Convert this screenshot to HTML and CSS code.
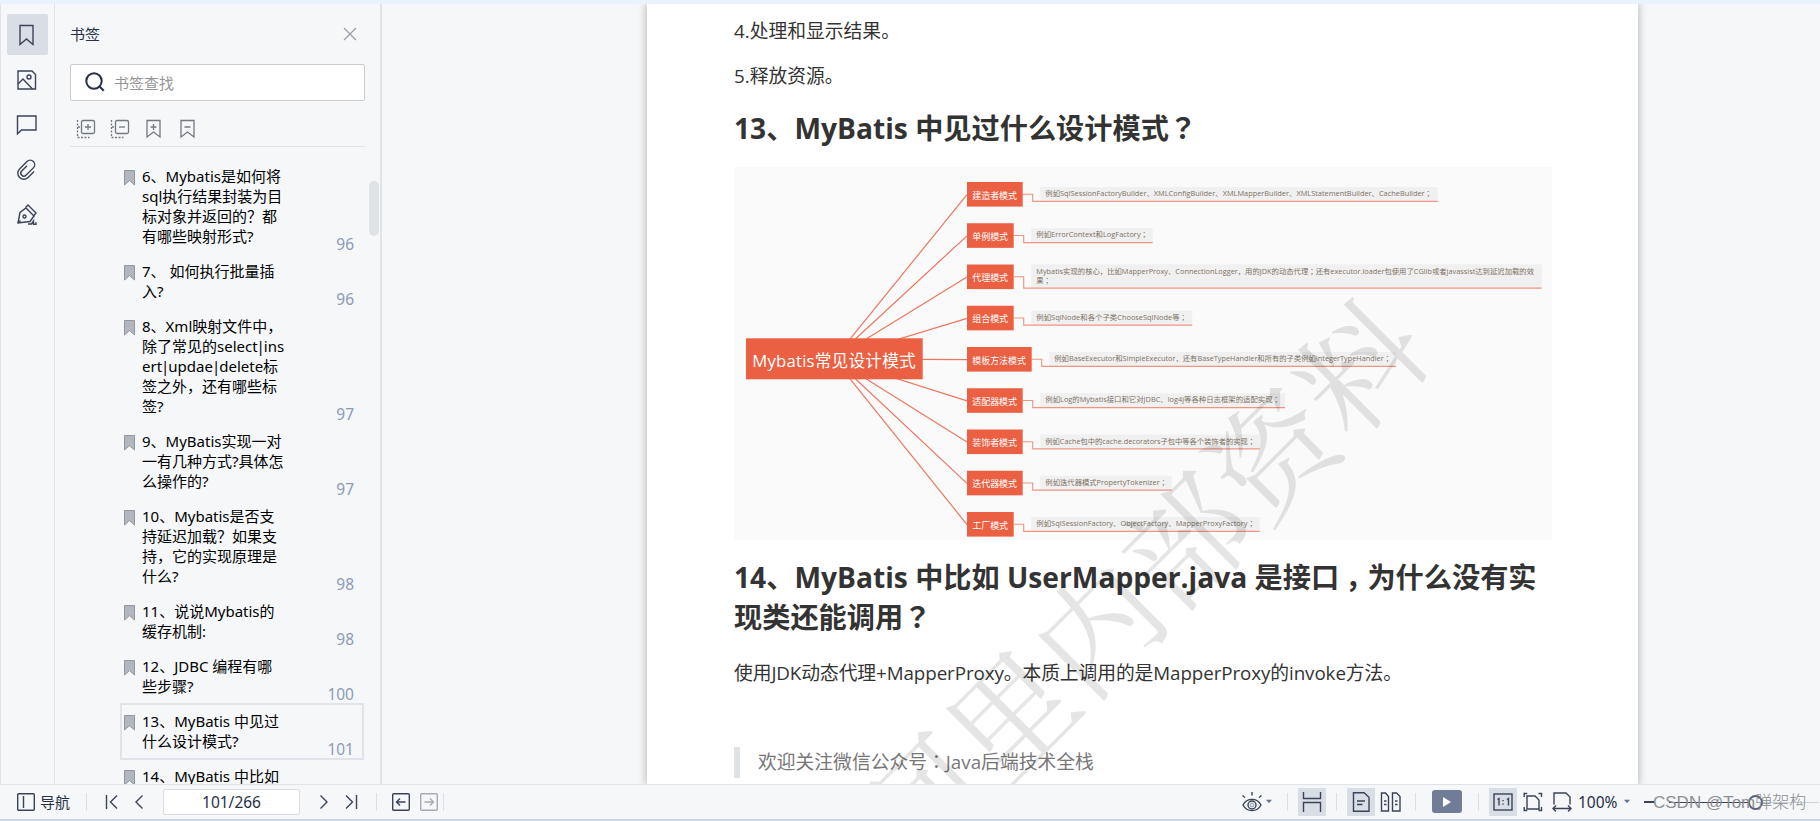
FILE: index.html
```html
<!DOCTYPE html>
<html lang="zh-CN">
<head>
<meta charset="utf-8">
<title>101/266</title>
<link rel="stylesheet" href="styles.css">
</head>
<body>
<div class="app">
  <div class="topstrip"></div>
  <div class="main">
    <nav class="rail">
      <div class="rail-btn on"><svg width="24" height="24" viewBox="0 0 24 24"><path d="M5 2.5h13v19l-6.500-5.500-6.500 5.500z"/></svg></div>
      <div class="rail-btn"><svg width="24" height="24" viewBox="0 0 24 24"><path d="M3 3h14l3.500 3.500v14.500h-17.500z"/><path d="M3 16l5-5 9.500 10"/><circle cx="14" cy="9" r="2"/></svg></div>
      <div class="rail-btn"><svg width="24" height="24" viewBox="0 0 24 24"><path d="M2.500 3h18.500v14h-14.500l-4 3.800z"/></svg></div>
      <div class="rail-btn"><svg width="24" height="24" viewBox="0 0 24 24"><path transform="rotate(45 12 12)" d="M9 9v7.500a3 3 0 0 0 6 0V6a4.500 4.500 0 0 0-9 0v10.500a6 6 0 0 0 12 0V8"/></svg></div>
      <div class="rail-btn"><svg width="24" height="24" viewBox="0 0 24 24"><path d="M3 20L5 9.500l6-4.500 8 8-4 5.500z"/><path d="M10.500 4.500L13 2l8 8-2.500 3"/><circle cx="9.500" cy="13.500" r="1.500"/><path d="M3 20l2.500-2.500M13 21h3.500l2-3v3.200h2.500v-2"/></svg></div>
    </nav>
    <aside class="panel">
      <header class="panel-head"><span>书签</span><svg width="14" height="14" viewBox="0 0 14 14"><path d="M1 1l12 12M13 1L1 13"/></svg></header>
      <div class="search"><svg width="20" height="20" viewBox="0 0 20 20"><circle cx="9" cy="9" r="7.700"/><path d="M14.500 14.500l4.300 4.300"/></svg><span>书签查找</span></div>
      <div class="tools">
        <svg width="20" height="20" viewBox="0 0 20 20"><rect x="5.500" y="1.500" width="13" height="13" rx="1.500"/><path d="M9 8h6M12 5v6"/><path class="dash" d="M1.500 1v17.500h12M2 8h3"/></svg>
        <svg width="20" height="20" viewBox="0 0 20 20"><rect x="5.500" y="1.500" width="13" height="13" rx="1.500"/><path d="M9 8h6"/><path class="dash" d="M1.500 1v17.500h12M2 8h3"/></svg>
        <svg width="20" height="20" viewBox="0 0 20 20"><path d="M3 1.500h13v16.500l-6.500-5-6.500 5zM6.500 8h6M9.500 5v6"/></svg>
        <svg width="20" height="20" viewBox="0 0 20 20"><path d="M3 1.500h13v16.500l-6.500-5-6.500 5zM6.500 8h6"/></svg>
      </div>
      <div class="list" id="list"></div>
      <div class="thumb"></div>
    </aside>
    <section class="doc">
      <article class="page">
        <p>4.处理和显示结果。</p>
        <p>5.释放资源。</p>
        <h2 class="h13">13、MyBatis 中见过什么设计模式<i lang="ja">？</i></h2>
        <svg class="map" id="map" width="818" height="373" viewBox="734 167 818 373"></svg>
        <h2 class="h14">14、MyBatis 中比如 UserMapper.java 是接口<i lang="ja" class="comma">，</i>为什么没有实<br>现类还能调用<i lang="ja">？</i></h2>
        <p class="answer">使用JDK动态代理+MapperProxy。本质上调用的是MapperProxy的invoke方法。</p>
        <blockquote>欢迎关注微信公众号<i lang="ja">：</i>Java后端技术全栈</blockquote>
        <svg class="mark" width="991" height="780" viewBox="647 4 991 780">
          <text transform="translate(1150 584) rotate(-45)" x="-376" y="41">阿里内部资料</text>
        </svg>
      </article>
    </section>
  </div>
  <footer class="bar">
    <svg class="b-nav" width="20" height="20" viewBox="0 0 20 20"><rect x="1.700" y="1.700" width="16.600" height="16.600" rx="1"/><path d="M7.500 4v12"/></svg>
    <span class="t-nav">导航</span><i class="sep s1"></i>
    <svg class="b-first" width="14" height="16" viewBox="0 0 14 16"><path d="M1.500 1v14M12 1.500L5.500 8l6.500 6.500"/></svg>
    <svg class="b-prev" width="10" height="16" viewBox="0 0 10 16"><path d="M8.500 1.500L2 8l6.500 6.500"/></svg>
    <div class="pageno">101/266</div>
    <svg class="b-next" width="10" height="16" viewBox="0 0 10 16"><path d="M1.500 1.500L8 8l-6.500 6.500"/></svg>
    <svg class="b-last" width="14" height="16" viewBox="0 0 14 16"><path d="M12.500 1v14M2 1.500L8.500 8 2 14.500"/></svg>
    <i class="sep s2"></i>
    <svg class="b-back" width="20" height="20" viewBox="0 0 20 20"><rect x="1.700" y="1.700" width="16.600" height="16.600" rx="1"/><path d="M14.500 10h-9M9 6.500L5.500 10 9 13.500"/></svg>
    <svg class="b-fwd" width="20" height="20" viewBox="0 0 20 20"><rect x="1.700" y="1.700" width="16.600" height="16.600" rx="1"/><path d="M5.500 10h9M11 6.500l3.500 3.500-3.500 3.500"/></svg>
    <i class="sep s3"></i>
    <svg class="b-eye" width="22" height="22" viewBox="0 0 22 22"><path d="M2 14c4-7.500 14-7.500 18 0-4 7.500-14 7.500-18 0z"/><circle cx="11" cy="14" r="4"/><circle cx="11" cy="14" r="1.700" opacity=".4"/><path d="M11 1v3.500M1.500 4.500l2.500 2M20.500 4.500l-2.500 2"/></svg>
    <svg class="caret c1" width="8" height="5" viewBox="0 0 8 5"><path d="M1 .8h6L4 4.200z"/></svg>
    <i class="sep s4"></i>
    <span class="tog g1"><svg width="20" height="20" viewBox="0 0 20 20"><path d="M1.500 0v6.500h17V0M1.500 20v-9.500h17V20"/></svg></span>
    <i class="sep s5"></i>
    <span class="tog g2"><svg width="20" height="20" viewBox="0 0 20 20"><path d="M2.500.8h10.500l5 4.500v14h-15.500zM6 9h8M6 12.500h5.500"/></svg></span>
    <svg class="b-two" width="22" height="20" viewBox="0 0 22 20"><path d="M1.500 1h4l3 3.500v14.500h-7zM12.500 1h4l3.500 3.500v14.500h-7.500zM4 9h2.500M4 12.500h2.500M15 9h2.500M15 12.500h2.500"/></svg>
    <i class="sep s6"></i>
    <span class="play"><svg width="8" height="10" viewBox="0 0 8 10"><path d="M0 0l8 5-8 5z"/></svg></span>
    <i class="sep s7"></i>
    <span class="tog g3"><svg width="20" height="20" viewBox="0 0 20 20"><rect x="1" y="2" width="18" height="16"/><path d="M4.500 7.500l1.500-1v7M14 7.500l1.500-1v7M10 8v1.200M10 11.500v1.200" /></svg></span>
    <svg class="b-fit" width="20" height="20" viewBox="0 0 20 20"><path d="M4 4h8l4 4v9H4zM1.200 5V1.500h3M15.500 1.500h3V5M1.200 15v3.500h3M15.500 18.500h3V15"/></svg>
    <svg class="b-wid" width="20" height="20" viewBox="0 0 20 20"><path d="M2 12.500V1h12l4 4v7.500M1 16.500h18M4 13.500l-3 3 3 3M16 13.500l3 3-3 3"/></svg>
    <span class="zoom">100%</span>
    <svg class="caret c2" width="8" height="5" viewBox="0 0 8 5"><path d="M1 .8h6L4 4.200z"/></svg>
    <div class="slider"><i class="minus"></i><i class="track"></i><i class="knob"></i><span class="csdn">CSDN @Tom弹架构</span></div>
  </footer>
</div>
<script src="app.js"></script>
</body>
</html>
```
FILE: styles.css
```css
* { box-sizing: border-box; }
body { margin: 0; overflow: hidden; font: 15px "Noto Sans", "Noto Sans CJK SC", sans-serif; color: #000; }
i { font-style: normal; }
svg { display: block; flex: none; fill: none; stroke: #3a4358; stroke-width: 1.4; }
.app { width: 1820px; height: 821px; display: flex; flex-direction: column; background: #f5f7f9; }
.topstrip { height: 4px; background: #eaf2ff; flex: none; }
.main { height: 780px; display: flex; flex: none; overflow: hidden; }

.rail { width: 55px; flex: none; border-left: 1px solid #e0e3ea; border-right: 1px solid #e0e3ea; padding: 10px 0 0 6px; display: flex; flex-direction: column; gap: 4px; }
.rail-btn { width: 41px; height: 41px; border-radius: 2px; display: flex; align-items: center; justify-content: center; padding-right: 2px; }
.rail-btn.on { background: #d9dee6; }

.panel { width: 327px; flex: none; position: relative; border-right: 2px solid #e0e3ea; padding: 0 15px; overflow: hidden; }
.panel-head { height: 60px; display: flex; align-items: center; justify-content: space-between; padding: 0 8px 1px 0; color: #273045; }
.panel-head svg { stroke: #9a9ea6; stroke-width: 1.2; }
.search { width: 295px; height: 37px; background: #fff; border: 1px solid #c9cbce; border-radius: 2px; display: flex; align-items: center; padding: 0 0 1px 14px; gap: 9px; color: #959595; }
.search svg { stroke-width: 2; stroke: #273045; }
.tools { width: 295px; height: 46px; border-bottom: 1px solid #e0e3ea; display: flex; align-items: center; padding: 12px 0 1px 6px; gap: 14px; }
.tools svg { stroke: #737881; stroke-width: 1.3; }
.tools .dash { stroke-dasharray: 2 1.5; }
.list { height: 637px; margin-top: 12px; overflow: hidden; padding-left: 51px; }
.bm { width: 242px; padding: 7px 0 8px 2px; display: flex; position: relative; }
.bm.sel { outline: 2px solid #e0e3ea; outline-offset: -1px; }
.bm svg { margin: 4px 7px 0 1px; fill: #b2b6bf; stroke: #92969f; stroke-width: 1; }
.bm span { line-height: 20px; white-space: pre; }
.bm u { text-decoration: none; letter-spacing: -1px; margin-left: -1px; }
.bm b { position: absolute; right: 9px; bottom: 0; line-height: 20px; font-weight: 400; font-size: 15.500px; color: #8d9ab8; }
.thumb { position: absolute; left: 314px; top: 177px; width: 10px; height: 55px; border-radius: 5px; background: #dfe3e6; }

.doc { flex: 1; padding-left: 265px; }
.page { position: relative; width: 991px; height: 780px; background: #fff; padding: 12px 87px 0; box-shadow: 0 0 8px 1px rgba(0,0,0,.25); overflow: visible; font-family: "Open Sans", "Noto Sans CJK SC", sans-serif; color: #333; }
.page i { font-family: "Noto Sans CJK JP", sans-serif; line-height: 0; }
.page .comma { padding-left: 6px; margin-right: -6px; }
.page p { margin: 0 0 15px; font-size: 18.800px; line-height: 30px; white-space: nowrap; }
.page h2 { margin: 0; font-size: 28.200px; line-height: 40px; font-weight: 700; white-space: nowrap; }
.page .h13 { margin: 17px 0 19px; }
.page .h14 { margin: 17px 0 21px; }
.page .answer { margin: 0 0 59px; letter-spacing: -.09px; }
.page blockquote { margin: 0; height: 31px; border-left: 6px solid #dfe2e5; padding-left: 18px; font-size: 18.800px; line-height: 30px; color: #777; }
.map { background: #fafafa; font-family: "Open Sans", "Noto Sans CJK SC", sans-serif; stroke: none; }
.map tspan { font-family: "Noto Sans CJK JP", sans-serif; }
.map .link { stroke: #ec7660; stroke-width: 1.2; fill: none; }
.map .thin { stroke: #ee9483; stroke-width: 1.1; fill: none; }
.map .node { fill: #eb5f42; }
.map .leaf { fill: #f0f0f0; }
.map .cap { fill: #fff; font-size: 9px; }
.map .root { fill: #fff; font-size: 16.700px; }
.map .note { fill: #7d7164; font-size: 7.400px; }
.mark { position: absolute; left: 0; top: 0; }
.mark text { font: 400 122px "Noto Serif CJK SC", "Noto Sans CJK SC", serif; letter-spacing: 1.500px; fill: #000; fill-opacity: .1; stroke: none; }

.bar { position: relative; z-index: 1; height: 37px; flex: none; border-top: 1px solid #e0e3ea; border-bottom: 2px solid #cbd6e7; background: #f5f7f9; display: flex; align-items: center; padding: 0 0 1px 16px; color: #273045; }
.sep { width: 1px; height: 18px; background: #dcdfe4; flex: none; }
.t-nav { width: 30px; margin-left: 4px; white-space: nowrap; line-height: 26px; }
.s1 { margin-left: 16px; }
.b-first { margin-left: 18px; }
.b-prev { margin-left: 15px; }
.pageno { width: 137px; height: 26px; margin-left: 19px; border: 1px solid #d9dce2; border-radius: 2px; background: #fff; text-align: center; line-height: 24px; font-size: 15.500px; flex: none; }
.b-next { margin-left: 19px; }
.b-last { margin-left: 15px; }
.s2 { margin-left: 18px; }
.b-back { margin-left: 14px; }
.b-fwd { margin-left: 8px; opacity: .42; }
.s3 { margin-left: 4px; }
.b-eye { margin-left: 797px; }
.caret { fill: #68738f; stroke: none; }
.c1 { margin-left: 2px; }
.s4 { margin-left: 14px; }
.tog { width: 28px; height: 28px; flex: none; background: #d9dee6; display: flex; align-items: center; justify-content: center; }
.g1 { margin-left: 10px; }
.s5 { margin-left: 10px; }
.g2 { margin-left: 10px; }
.b-two { margin-left: 5px; }
.s6 { margin-left: 13px; }
.play { width: 30px; height: 23px; margin-left: 16px; border-radius: 3px; background: #717c96; display: flex; align-items: center; justify-content: center; flex: none; }
.play svg { fill: #fff; stroke: none; }
.s7 { margin-left: 16px; }
.g3 { margin-left: 10px; }
.b-fit { margin-left: 6px; }
.b-wid { margin-left: 9px; }
.zoom { width: 41px; margin-left: 6px; font-size: 15.500px; }
.c2 { margin-left: 4px; }
.slider { position: relative; width: 176px; height: 34px; margin-left: 12px; flex: none; }
.minus { position: absolute; left: 1px; top: 16px; width: 11px; height: 2px; background: #3a4358; }
.track { position: absolute; left: 26px; top: 17px; width: 150px; height: 1px; background: linear-gradient(90deg, #3a4358 0 90px, #cdd3de 90px); }
.knob { position: absolute; left: 105px; top: 10px; width: 15px; height: 15px; border: 2px solid #59606f; border-radius: 50%; background: #f5f7f9; }
.csdn { position: absolute; left: 10px; top: 6px; font: 300 17px/24px "Liberation Sans", "Noto Sans CJK SC", sans-serif; color: #8d8f93; white-space: nowrap; }
```
FILE: app.js
```js
const items = [
  ["6、Mybatis是如何将\nsql执行结果封装为目\n标对象并返回的？都\n有哪些映射形式?", 96],
  ["7、 如何执行批量插\n入?", 96],
  ["8、Xml映射文件中，\n除了常见的select|ins\nert|updae|delete标\n签之外，还有哪些标\n签?", 97],
  ["9、MyBatis实现一对\n一有几种方式?具体怎\n么操作的?", 97],
  ["10、Mybatis是否支\n持延迟加载？如果支\n持，它的实现原理是\n什么?", 98],
  ["11、说说Mybatis的\n缓存机制:", 98],
  ["12、JDBC 编程有哪\n些步骤?", 100],
  ["13、MyBatis 中见过\n什么设计模式?", 101],
  ["14、MyBatis 中比如", ""]
];
document.getElementById("list").innerHTML = items.map(([t, n], k) =>
  `<div class="bm${k === 7 ? " sel" : ""}"><svg width="11" height="16" viewBox="0 0 11 16"><path d="M.5.500h10v14.500l-5-4.500-5 4.500z"/></svg><span>${t.replace(/\|/g, "<u>|</u>")}</span><b>${n}</b></div>`).join("");

// name, leaf right edge, text right edge, text lines
const nodes = [
  ["建造者模式", 1437.7, 1432, ["例如SqlSessionFactoryBuilder、XMLConfigBuilder、XMLMapperBuilder、XMLStatementBuilder、CacheBuilder；"]],
  ["单例模式", 1152.7, 1148, ["例如ErrorContext和LogFactory；"]],
  ["代理模式", 1541.7, 1534, ["Mybatis实现的核心，比如MapperProxy、ConnectionLogger，用的JDK的动态代理；还有executor.loader包使用了CGlib或者javassist达到延迟加载的效", "果；"]],
  ["组合模式", 1192.3, 1187, ["例如SqlNode和各个子类ChooseSqlNode等；"]],
  ["模板方法模式", 1396, 1391, ["例如BaseExecutor和SimpleExecutor，还有BaseTypeHandler和所有的子类例如IntegerTypeHandler；"]],
  ["适配器模式", 1285, 1280, ["例如Log的Mybatis接口和它对JDBC、log4j等各种日志框架的适配实现；"]],
  ["装饰者模式", 1259.7, 1255, ["例如Cache包中的cache.decorators子包中等各个装饰者的实现；"]],
  ["迭代器模式", 1171.7, 1167, ["例如迭代器模式PropertyTokenizer；"]],
  ["工厂模式", 1259.7, 1255, ["例如SqlSessionFactory、ObjectFactory、MapperProxyFactory；"]]
];
let out = "";
nodes.forEach((d, k) => {
  const cy = 194.3 + 41.25 * k;
  out += `<path class="link" d="M834 358.800L967 ${cy + .3}"/>`;
});
nodes.forEach(([name, right, textRight, lines], k) => {
  const cy = 194.3 + 41.25 * k, w = name.length * 9 + 10.7, x = 967 + w, two = lines.length > 1;
  const top = two ? cy - 12.5 : cy - 7.3, bottom = two ? cy + 11.3 : cy + 7.1;
  out += `<rect class="leaf" x="${x + 17.5}" y="${top}" width="${right - x - 17.5}" height="${bottom - top}"/>`;
  out += `<path class="thin" d="M${x} ${cy}h10V${bottom}H${right}"/>`;
  out += `<rect class="node" x="967" y="${cy - 12.3}" width="${w}" height="24.600"/>`;
  out += `<text class="cap" x="972.300" y="${cy + 4.2}" textLength="${name.length * 8.95}">${name}</text>`;
  const tx = x + 22.6;
  lines.forEach((t, n) => {
    const body = t.replace(/；/g, '<tspan lang="ja">；</tspan>');
    out += `<text class="note" x="${tx}" y="${(two ? cy - 3.3 : cy + 1.9) + n * 9.8}" textLength="${n ? 14.6 : textRight - tx}" lengthAdjust="spacingAndGlyphs">${body}</text>`;
  });
});
out += `<rect class="node" x="746" y="338.300" width="176.700" height="41"/><text class="root" x="752.300" y="366.500" textLength="163.500">Mybatis常见设计模式</text>`;
document.getElementById("map").innerHTML = out;
```
